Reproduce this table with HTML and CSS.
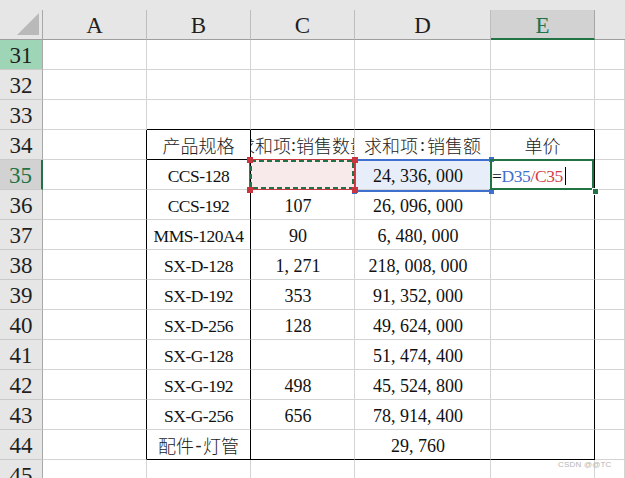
FILE: index.html
```html
<!DOCTYPE html>
<html>
<head>
<meta charset="utf-8">
<link rel="stylesheet" href="styles.css">
</head>
<body>
<div class="sheet">
  <div class="topstrip"></div>
  <div class="row colhdr">
    <div class="hc corner"><svg class="tri" width="42" height="29" viewBox="0 0 42 29"><polygon points="17,25 39,25 39,3" fill="#b9b9b9"/></svg></div>
    <div class="hc">A</div>
    <div class="hc">B</div>
    <div class="hc">C</div>
    <div class="hc">D</div>
    <div class="hc sel">E</div>
    <div class="hc last"></div>
  </div>

  <div class="row"><div class="rh green">31</div><div class="c"></div><div class="c"></div><div class="c"></div><div class="c"></div><div class="c"></div><div class="c"></div></div>
  <div class="row"><div class="rh">32</div><div class="c"></div><div class="c"></div><div class="c"></div><div class="c"></div><div class="c"></div><div class="c"></div></div>
  <div class="row"><div class="rh">33</div><div class="c"></div><div class="c bb"></div><div class="c bb"></div><div class="c bb"></div><div class="c bb"></div><div class="c"></div></div>

  <div class="row"><div class="rh">34</div><div class="c br"></div>
    <div class="c br bb cjk">产品规格</div>
    <div class="c bb cjk clip">求和项<span class="m">:</span>销售数量</div>
    <div class="c bb cjk">求和项<span class="m">:</span>销售额</div>
    <div class="c br bb cjk">单价</div><div class="c"></div></div>

  <div class="row"><div class="rh cur">35</div><div class="c br"></div>
    <div class="c br lbl">CCS-128</div>
    <div class="c pink"><svg class="ov ov-c" width="114" height="40" viewBox="0 0 114 40"><rect x="3.5" y="4.5" width="105" height="30" fill="none" stroke="#c8353f" stroke-width="1"/><rect x="5" y="6" width="102" height="27" fill="none" stroke="#217346" stroke-width="2" stroke-dasharray="5 3"/><rect x="1" y="2" width="6" height="6" fill="#c8353f"/><rect x="106" y="2" width="6" height="6" fill="#c8353f"/><rect x="1" y="32" width="6" height="6" fill="#c8353f"/><rect x="106" y="32" width="6" height="6" fill="#c8353f"/></svg></div>
    <div class="c num blue">24<i>,</i>336<i>,</i>000<svg class="ov ov-d" width="146" height="42" viewBox="0 0 146 42"><rect x="5" y="5" width="136" height="31" fill="none" stroke="#3f70cf" stroke-width="2"/><rect x="2" y="2" width="5" height="5" fill="#3f70cf"/><rect x="139" y="2" width="5" height="5" fill="#3f70cf"/><rect x="2" y="34" width="5" height="5" fill="#3f70cf"/><rect x="139" y="34" width="5" height="5" fill="#3f70cf"/></svg></div>
    <div class="c br edit"><span class="fx"><span class="k">=</span><span class="rb">D35</span><span class="rr">/C35</span><span class="caret"></span></span><span class="active"></span><span class="fill"></span></div>
    <div class="c"></div></div>

  <div class="row"><div class="rh">36</div><div class="c br"></div><div class="c br lbl">CCS-192</div><div class="c num">107</div><div class="c num">26<i>,</i>096<i>,</i>000</div><div class="c br"></div><div class="c"></div></div>
  <div class="row"><div class="rh">37</div><div class="c br"></div><div class="c br lbl">MMS-120A4</div><div class="c num">90</div><div class="c num">6<i>,</i>480<i>,</i>000</div><div class="c br"></div><div class="c"></div></div>
  <div class="row"><div class="rh">38</div><div class="c br"></div><div class="c br lbl">SX-D-128</div><div class="c num">1<i>,</i>271</div><div class="c num">218<i>,</i>008<i>,</i>000</div><div class="c br"></div><div class="c"></div></div>
  <div class="row"><div class="rh">39</div><div class="c br"></div><div class="c br lbl">SX-D-192</div><div class="c num">353</div><div class="c num">91<i>,</i>352<i>,</i>000</div><div class="c br"></div><div class="c"></div></div>
  <div class="row"><div class="rh">40</div><div class="c br"></div><div class="c br lbl">SX-D-256</div><div class="c num">128</div><div class="c num">49<i>,</i>624<i>,</i>000</div><div class="c br"></div><div class="c"></div></div>
  <div class="row"><div class="rh">41</div><div class="c br"></div><div class="c br lbl">SX-G-128</div><div class="c num"></div><div class="c num">51<i>,</i>474<i>,</i>400</div><div class="c br"></div><div class="c"></div></div>
  <div class="row"><div class="rh">42</div><div class="c br"></div><div class="c br lbl">SX-G-192</div><div class="c num">498</div><div class="c num">45<i>,</i>524<i>,</i>800</div><div class="c br"></div><div class="c"></div></div>
  <div class="row"><div class="rh">43</div><div class="c br"></div><div class="c br lbl">SX-G-256</div><div class="c num">656</div><div class="c num">78<i>,</i>914<i>,</i>400</div><div class="c br"></div><div class="c"></div></div>
  <div class="row"><div class="rh">44</div><div class="c br"></div><div class="c br bb cjk">配件<span class="m">-</span>灯管</div><div class="c bb num"></div><div class="c bb num">29<i>,</i>760</div><div class="c br bb"></div><div class="c"></div></div>
  <div class="row"><div class="rh">45</div><div class="c"></div><div class="c"></div><div class="c"></div><div class="c"></div><div class="c"></div><div class="c"></div></div>

  <div class="watermark">CSDN @@TC</div>
</div>
</body>
</html>
```

FILE: styles.css
```css
html, body {
  margin: 0;
  padding: 0;
  background: #ffffff;
}
.sheet {
  position: relative;
  width: 625px;
  height: 478px;
  overflow: hidden;
  background: #ffffff;
}
.topstrip {
  height: 10px;
  background: #e6e6e6;
}
.row {
  display: grid;
  grid-template-columns: 43px 104px 104px 104px 136px 104px 1fr;
  height: 30px;
}
.hc, .rh, .c {
  box-sizing: border-box;
  height: 30px;
  display: flex;
  align-items: center;
  justify-content: center;
  white-space: nowrap;
}
.hc {
  background: #e6e6e6;
  border-right: 1px solid #bdbdbd;
  border-bottom: 1px solid #9e9e9e;
  font-family: "Liberation Serif", serif;
  font-size: 23px;
  color: #1f1f1f;
  padding-top: 3px;
}
.hc.corner {
  position: relative;
  border-right: 1px solid #a8a8a8;
}
.tri {
  position: absolute;
  left: 0;
  top: 0;
}
.hc.sel {
  background: #d2d2d2;
  border-right: 1px solid #a6a6a6;
  border-bottom: 2px solid #217346;
  color: #217346;
  padding-top: 4px;
}
.hc.last {
  border-right: none;
}
.rh {
  background: #e6e6e6;
  border-right: 1px solid #a8a8a8;
  border-bottom: 1px solid #cacaca;
  font-family: "Liberation Serif", serif;
  font-size: 23px;
  color: #1f1f1f;
  padding-top: 3px;
}
.rh.green {
  background: #9fd5b7;
}
.rh.cur {
  background: #d2d2d2;
  border-right: 2px solid #217346;
  color: #217346;
}
.c {
  position: relative;
  border-right: 1px solid #d4d4d4;
  border-bottom: 1px solid #d4d4d4;
  font-family: "Liberation Serif", "Noto Sans CJK SC", serif;
  font-size: 18px;
  color: #111111;
  padding-top: 3px;
}
.c i {
  font-style: normal;
  display: inline-block;
  width: 9px;
  text-align: left;
}
.c.bb {
  border-bottom-color: #000000;
}
.c.br {
  border-right-color: #000000;
}
.c.num {
  padding-right: 9px;
}
.c.lbl {
  font-size: 17.5px;
  letter-spacing: -0.5px;
}
.c.cjk {
  font-family: "Noto Sans CJK SC", sans-serif;
  font-size: 18px;
  font-weight: 300;
  letter-spacing: 0;
  color: #222222;
  padding-top: 1px;
}
.c.cjk .m {
  font-family: "Liberation Serif", serif;
  font-size: 18px;
  display: inline-block;
  width: 9px;
  text-align: center;
}
.c.clip {
  overflow: hidden;
}
.c.pink {
  background: #f8eaea;
}
.c.blue {
  background: #e8eef9;
}
.ov {
  position: absolute;
  pointer-events: none;
}
.ov-c {
  left: -5px;
  top: -5px;
  z-index: 2;
}
.ov-d {
  left: -5px;
  top: -5px;
  z-index: 1;
}
.c.edit {
  justify-content: flex-start;
  padding-left: 1px;
  font-size: 17.5px;
  letter-spacing: -0.4px;
}
.fx {
  display: flex;
  align-items: center;
}
.k {
  color: #111111;
}
.rb {
  color: #3f70cf;
}
.rr {
  color: #d13f4a;
}
.caret {
  display: inline-block;
  width: 1px;
  height: 18px;
  background: #000000;
  margin-left: 2px;
}
.active {
  position: absolute;
  left: -1px;
  top: -1px;
  width: 104px;
  height: 31px;
  box-sizing: border-box;
  border: 2px solid #217346;
  z-index: 3;
}
.fill {
  position: absolute;
  left: 101px;
  top: 28px;
  width: 5px;
  height: 5px;
  background: #217346;
  border: 1px solid #ffffff;
  z-index: 4;
}
.watermark {
  position: absolute;
  left: 558px;
  top: 460px;
  font-family: "Liberation Sans", Arial, sans-serif;
  font-size: 8px;
  letter-spacing: 0.2px;
  color: #b5b5b5;
}
```
